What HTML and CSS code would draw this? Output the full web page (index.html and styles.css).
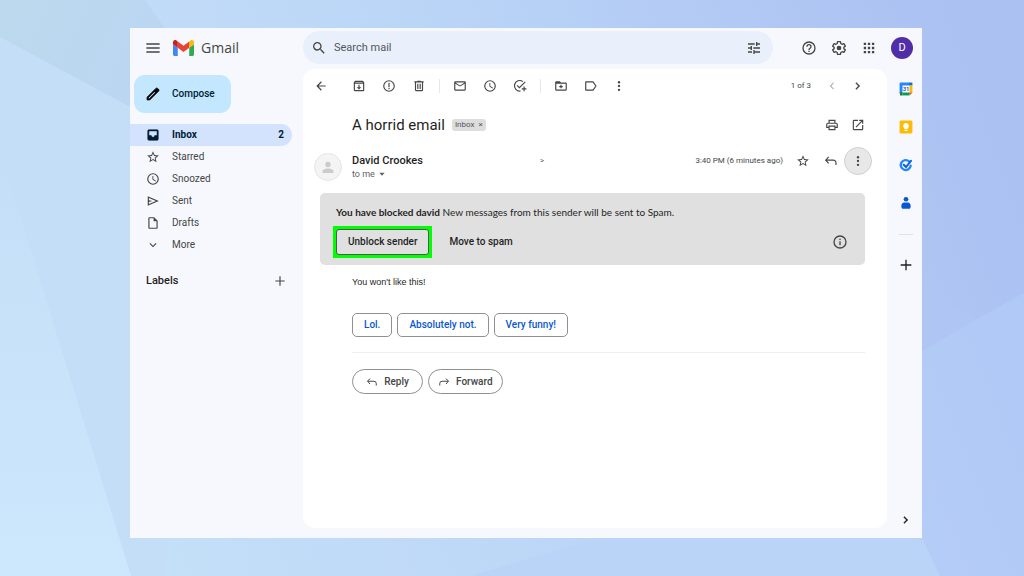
FILE: index.html
```html
<!DOCTYPE html>
<html lang="en">
<head>
  <meta charset="UTF-8" />
  <meta name="viewport" content="width=device-width, initial-scale=1" />
  <title>A horrid email - Gmail</title>
  <link rel="stylesheet" href="styles.css">
</head>
<body>
  <svg class="backdrop" viewBox="0 0 1024 576" preserveAspectRatio="none" aria-hidden="true">
    <defs>
      <linearGradient id="sky" x1="0" y1="0.6" x2="1" y2="0.4">
        <stop offset="0" stop-color="#c6e1f8" />
        <stop offset="0.5" stop-color="#bbd5f7" />
        <stop offset="1" stop-color="#abc1f2" />
      </linearGradient>
      <linearGradient id="corner" x1="0" y1="0" x2="1" y2="0.3">
        <stop offset="0" stop-color="#bdd9ed" />
        <stop offset="1" stop-color="#b9d5f3" />
      </linearGradient>
      <linearGradient id="left" x1="0" y1="0" x2="0" y2="1">
        <stop offset="0" stop-color="#c3def6" />
        <stop offset="1" stop-color="#cde8fd" />
      </linearGradient>
      <linearGradient id="low" x1="0" y1="0.6" x2="1" y2="0.4">
        <stop offset="0" stop-color="#bbd5f8" />
        <stop offset="1" stop-color="#b1c9f6" />
      </linearGradient>
    </defs>
    <rect width="1024" height="576" fill="url(#sky)" />
    <path d="M0 0h145l60 85-60 40L0 37z" fill="url(#corner)" />
    <path d="M0 37l205 110-40 429h-34L0 150z" fill="#c3def6" />
    <path d="M0 150l131 426H0z" fill="url(#left)" />
    <path d="M600 538L922 351l55-32 47-26v283H470z" fill="url(#low)" />
    <path d="M900 275l77 44-77 44z" fill="#afc6f4" />
    <path d="M922 538l18 38H470l130-38z" fill="#bad4f8" />
  </svg>

  <svg class="sprite" aria-hidden="true">
    <symbol id="i-menu" viewBox="0 0 24 24"><path d="M2 5h20v2H2zm0 6h20v2H2zm0 6h20v2H2z" /></symbol>
    <symbol id="i-search" viewBox="0 0 24 24"><path d="M15.500 14h-.79l-.28-.27A6.470 6.470 0 0 0 16 9.500 6.500 6.500 0 1 0 9.500 16c1.610 0 3.090-.59 4.230-1.570l.27.28v.79l5 4.990L20.490 19zm-6 0C7.010 14 5 11.990 5 9.500S7.010 5 9.500 5 14 7.010 14 9.500 11.990 14 9.500 14z" /></symbol>
    <symbol id="i-tune" viewBox="0 0 24 24"><path d="M3 17v2h6v-2zM3 5v2h10V5zm10 16v-2h8v-2h-8v-2h-2v6zM7 9v2H3v2h4v2h2V9zm14 4v-2H11v2zm-6-4h2V7h4V5h-4V3h-2z" /></symbol>
    <symbol id="i-help" viewBox="0 0 24 24"><path d="M11 18h2v-2h-2zm1-16a10 10 0 1 0 0 20 10 10 0 0 0 0-20zm0 18a8 8 0 1 1 0-16 8 8 0 0 1 0 16zm0-14a4 4 0 0 0-4 4h2c0-1.100.9-2 2-2s2 .9 2 2c0 2-3 1.750-3 5h2c0-2.250 3-2.500 3-5a4 4 0 0 0-4-4z" /></symbol>
    <symbol id="i-gear" viewBox="0 0 24 24"><path d="M9.800 2.500h4.400l.5 2.800 1.900 1.100 2.700-1 2.200 3.800-2.200 1.800v2l2.200 1.800-2.200 3.800-2.700-1-1.900 1.100-.5 2.800H9.800l-.5-2.800-1.900-1.100-2.700 1-2.200-3.800L4.700 13v-2L2.500 9.200l2.200-3.800 2.700 1 1.900-1.100z" fill="none" stroke="currentColor" stroke-width="2" stroke-linejoin="round" /><circle cx="12" cy="12" r="3.500" /></symbol>
    <symbol id="i-apps" viewBox="0 0 24 24"><path d="M3 3h4v4H3zm7 0h4v4h-4zm7 0h4v4h-4zM3 10h4v4H3zm7 0h4v4h-4zm7 0h4v4h-4zM3 17h4v4H3zm7 0h4v4h-4zm7 0h4v4h-4z" /></symbol>
    <symbol id="i-pencil" viewBox="0 0 24 24"><path d="M20.410 4.940l-1.350-1.350a2 2 0 0 0-2.830 0L3 16.820V21h4.180L20.410 7.770a2 2 0 0 0 0-2.830zM6.410 19.060H5v-1.360L14.060 8.600l1.410 1.410z" stroke="currentColor" /></symbol>
    <symbol id="i-inbox" viewBox="0 0 24 24"><path d="M19 3H5a2 2 0 0 0-2 2v14c0 1.100.9 2 2 2h14a2 2 0 0 0 2-2V5a2 2 0 0 0-2-2zm0 10h-4a3 3 0 0 1-6 0H5V5h14z" stroke="currentColor" /></symbol>
    <symbol id="i-star" viewBox="0 0 24 24"><path d="M22 9.240l-7.190-.62L12 2 9.190 8.630 2 9.240l5.460 4.730L5.820 21 12 17.270 18.180 21l-1.630-7.030zM12 15.400l-3.760 2.270 1-4.280-3.320-2.880 4.380-.38L12 6.100l1.710 4.040 4.380.38-3.320 2.880 1 4.280z" /></symbol>
    <symbol id="i-clock" viewBox="0 0 24 24"><path d="M12 2a10 10 0 1 0 0 20 10 10 0 0 0 0-20zm0 18a8 8 0 1 1 0-16 8 8 0 0 1 0 16zm.5-13H11v6l5.200 3.200.8-1.300-4.500-2.700z" /></symbol>
    <symbol id="i-send" viewBox="0 0 24 24"><path d="M3 4v16l19-8zm2 3l11.900 5L5 17v-3.500l6-1.500-6-1.500z" /></symbol>
    <symbol id="i-draft" viewBox="0 0 24 24"><path d="M14 2H6a2 2 0 0 0-2 2v16c0 1.100.9 2 2 2h12a2 2 0 0 0 2-2V8zM6 20V4h7v5h5v11z" /></symbol>
    <symbol id="i-down" viewBox="0 0 24 24"><path d="M12 16l-6-6 1.400-1.400 4.600 4.600 4.600-4.600L18 10z" /></symbol>
    <symbol id="i-plus" viewBox="0 0 24 24"><path d="M20 13h-7v7h-2v-7H4v-2h7V4h2v7h7z" /></symbol>
    <symbol id="i-back" viewBox="0 0 24 24"><path d="M20 11H7.830l5.590-5.590L12 4l-8 8 8 8 1.410-1.410L7.830 13H20z" /></symbol>
    <symbol id="i-archive" viewBox="0 0 24 24"><path d="M20.500 5.200l-1.400-1.700c-.3-.3-.7-.5-1.100-.5H6c-.5 0-.9.200-1.200.5L3.500 5.200c-.3.400-.5.800-.5 1.300V19c0 1.100.9 2 2 2h14a2 2 0 0 0 2-2V6.500c0-.5-.2-.9-.5-1.300zM6.200 5h11.600l.8 1H5.400zM5 19V8h14v11zm8-9h-2v4H8l4 4 4-4h-3z" /></symbol>
    <symbol id="i-report" viewBox="0 0 24 24"><path d="M12 2a10 10 0 1 0 0 20 10 10 0 0 0 0-20zm0 18a8 8 0 1 1 0-16 8 8 0 0 1 0 16zM11 6.500h2V14h-2zm0 9h2v2h-2z" /></symbol>
    <symbol id="i-trash" viewBox="0 0 24 24"><path d="M15 4V3H9v1H4v2h1v13c0 1.100.9 2 2 2h10a2 2 0 0 0 2-2V6h1V4zm2 15H7V6h10zM9 8h2v9H9zm4 0h2v9h-2z" /></symbol>
    <symbol id="i-mail" viewBox="0 0 24 24"><path d="M20 4H4a2 2 0 0 0-2 2v12c0 1.100.9 2 2 2h16a2 2 0 0 0 2-2V6a2 2 0 0 0-2-2zm0 14H4V8l8 5 8-5zm-8-7L4 6h16z" /></symbol>
    <symbol id="i-task" viewBox="0 0 24 24"><path d="M17 4.500A9 9 0 1 0 13 20.500" fill="none" stroke="currentColor" stroke-width="2" /><path d="M7 11l4 4L21 5" fill="none" stroke="currentColor" stroke-width="2" /><path d="M18 13h2v3h3v2h-3v3h-2v-3h-3v-2h3z" /></symbol>
    <symbol id="i-folder" viewBox="0 0 24 24"><path d="M20 6h-8l-2-2H4a2 2 0 0 0-2 2v12c0 1.100.9 2 2 2h16a2 2 0 0 0 2-2V8a2 2 0 0 0-2-2zm0 12H4V8h16zm-9-8h2v2h2v2h-2v2h-2v-2H9v-2h2z" /></symbol>
    <symbol id="i-label" viewBox="0 0 24 24"><path d="M3 5h12.500l5 7-5 7H3z" fill="none" stroke="currentColor" stroke-width="2" stroke-linejoin="round" /></symbol>
    <symbol id="i-dots" viewBox="0 0 24 24"><circle cx="12" cy="5.500" r="2" /><circle cx="12" cy="12" r="2" /><circle cx="12" cy="18.500" r="2" /></symbol>
    <symbol id="i-prev" viewBox="0 0 24 24"><path d="M15.400 7.400L14 6l-6 6 6 6 1.400-1.400-4.600-4.600z" /></symbol>
    <symbol id="i-next" viewBox="0 0 24 24"><path d="M9.400 6L8 7.400l4.600 4.600L8 16.600 9.400 18l6-6z" stroke="currentColor" stroke-width=".6" /></symbol>
    <symbol id="i-print" viewBox="0 0 24 24"><path d="M19 8h-1V3H6v5H5a3 3 0 0 0-3 3v6h4v4h12v-4h4v-6a3 3 0 0 0-3-3zM8 5h8v3H8zm8 14H8v-4h8zm2-4v-2H6v2H4v-4c0-.55.450-1 1-1h14c.55 0 1 .450 1 1v4z" /></symbol>
    <symbol id="i-open" viewBox="0 0 24 24"><path d="M19 19H5V5h7V3H5a2 2 0 0 0-2 2v14c0 1.100.9 2 2 2h14a2 2 0 0 0 2-2v-7h-2zM14 3v2h3.590l-9.830 9.830 1.410 1.410L19 6.410V10h2V3z" /></symbol>
    <symbol id="i-reply" viewBox="0 0 24 24"><path d="M8 5l-5 5.500L8 16M3.500 10.500H16a4.500 4.500 0 0 1 4.500 4.500v4" fill="none" stroke="currentColor" stroke-width="2" /></symbol>
    <symbol id="i-forward" viewBox="0 0 24 24"><path d="M16 5l5 5.500-5 5.500M20.500 10.500H8A4.500 4.500 0 0 0 3.500 15v4" fill="none" stroke="currentColor" stroke-width="2" /></symbol>
    <symbol id="i-info" viewBox="0 0 24 24"><path d="M12 2a10 10 0 1 0 0 20 10 10 0 0 0 0-20zm0 18a8 8 0 1 1 0-16 8 8 0 0 1 0 16zM11 7h2v2h-2zm0 4h2v6h-2z" /></symbol>
    <symbol id="i-caret" viewBox="0 0 24 24"><path d="M4 8h16l-8 9z" /></symbol>
  </svg>

  <div class="window">
    <header class="topbar">
      <div class="brand">
        <button class="icon-btn" aria-label="Main menu"><svg class="icon icon-lg"><use href="#i-menu" /></svg></button>
        <a class="logo" href="#">
          <svg class="logo-mark" viewBox="52 42 88 66" aria-hidden="true">
            <path fill="#4285f4" d="M58 108h14V74L52 59v43c0 3.320 2.690 6 6 6" />
            <path fill="#34a853" d="M120 108h14c3.320 0 6-2.690 6-6V59l-20 15" />
            <path fill="#fbbc04" d="M120 48v26l20-15v-8c0-7.420-8.470-11.650-14.400-7.200" />
            <path fill="#ea4335" d="M72 74V48l24 18 24-18v26L96 92" />
            <path fill="#c5221f" d="M52 51v8l20 15V48l-5.600-4.200C60.460 39.350 52 43.580 52 51" />
          </svg>
          Gmail
        </a>
      </div>
      <form class="search">
        <button type="button" class="icon-btn" aria-label="Search"><svg class="icon icon-lg"><use href="#i-search" /></svg></button>
        <input type="search" placeholder="Search mail" aria-label="Search mail" />
        <button type="button" class="icon-btn" aria-label="Search options"><svg class="icon icon-lg"><use href="#i-tune" /></svg></button>
      </form>
      <div class="account">
        <button class="icon-btn" aria-label="Support"><svg class="icon icon-lg"><use href="#i-help" /></svg></button>
        <button class="icon-btn" aria-label="Settings"><svg class="icon icon-lg"><use href="#i-gear" /></svg></button>
        <button class="icon-btn" aria-label="Google apps"><svg class="icon"><use href="#i-apps" /></svg></button>
        <button class="profile" aria-label="Account">D</button>
      </div>
    </header>

    <nav class="sidebar">
      <button class="compose"><svg class="icon icon-lg"><use href="#i-pencil" /></svg>Compose</button>
      <a class="folder active" href="#"><svg class="icon"><use href="#i-inbox" /></svg>Inbox<span class="count">2</span></a>
      <a class="folder" href="#"><svg class="icon"><use href="#i-star" /></svg>Starred</a>
      <a class="folder" href="#"><svg class="icon"><use href="#i-clock" /></svg>Snoozed</a>
      <a class="folder" href="#"><svg class="icon"><use href="#i-send" /></svg>Sent</a>
      <a class="folder" href="#"><svg class="icon"><use href="#i-draft" /></svg>Drafts</a>
      <a class="folder" href="#"><svg class="icon"><use href="#i-down" /></svg>More</a>
      <div class="labels">
        <h2>Labels</h2>
        <button class="icon-btn" aria-label="Create new label"><svg class="icon"><use href="#i-plus" /></svg></button>
      </div>
    </nav>

    <main class="mail">
      <div class="toolbar">
        <button class="icon-btn back" aria-label="Back"><svg class="icon"><use href="#i-back" /></svg></button>
        <button class="icon-btn" aria-label="Archive"><svg class="icon"><use href="#i-archive" /></svg></button>
        <button class="icon-btn" aria-label="Report spam"><svg class="icon"><use href="#i-report" /></svg></button>
        <button class="icon-btn" aria-label="Delete"><svg class="icon"><use href="#i-trash" /></svg></button>
        <span class="divider"></span>
        <button class="icon-btn" aria-label="Mark as unread"><svg class="icon"><use href="#i-mail" /></svg></button>
        <button class="icon-btn" aria-label="Snooze"><svg class="icon"><use href="#i-clock" /></svg></button>
        <button class="icon-btn" aria-label="Add to tasks"><svg class="icon"><use href="#i-task" /></svg></button>
        <span class="divider"></span>
        <button class="icon-btn" aria-label="Move to"><svg class="icon"><use href="#i-folder" /></svg></button>
        <button class="icon-btn" aria-label="Labels"><svg class="icon"><use href="#i-label" /></svg></button>
        <button class="icon-btn narrow" aria-label="More"><svg class="icon"><use href="#i-dots" /></svg></button>
        <span class="pager">1 of 3</span>
        <button class="icon-btn narrow" aria-label="Newer" disabled><svg class="icon"><use href="#i-prev" /></svg></button>
        <button class="icon-btn narrow" aria-label="Older"><svg class="icon"><use href="#i-next" /></svg></button>
      </div>

      <div class="subject">
        <h1>A horrid email</h1>
        <span class="tag">Inbox <button aria-label="Remove label Inbox">×</button></span>
        <div class="subject-actions">
          <button class="icon-btn narrow" aria-label="Print"><svg class="icon"><use href="#i-print" /></svg></button>
          <button class="icon-btn narrow" aria-label="Open in new window"><svg class="icon"><use href="#i-open" /></svg></button>
        </div>
      </div>

      <div class="sender">
        <svg class="avatar" viewBox="0 0 28 28" aria-hidden="true">
          <circle cx="14" cy="14" r="13.500" fill="#f4f4f4" stroke="#e4e4e4" />
          <circle cx="14" cy="11.500" r="2.700" fill="#cbcbcb" />
          <path d="M8.500 20v-1.500c0-4 11-4 11 0V20z" fill="#cbcbcb" />
        </svg>
        <div class="who">
          <strong>David Crookes</strong>
          <button class="to">to me <svg class="icon icon-sm"><use href="#i-caret" /></svg></button>
        </div>
        <span class="bracket">&gt;</span>
        <span class="date">3:40 PM (6 minutes ago)</span>
        <button class="icon-btn" aria-label="Star"><svg class="icon"><use href="#i-star" /></svg></button>
        <button class="icon-btn narrow" aria-label="Reply"><svg class="icon"><use href="#i-reply" /></svg></button>
        <button class="icon-btn round" aria-label="More options"><svg class="icon"><use href="#i-dots" /></svg></button>
      </div>

      <section class="notice">
        <p><strong>You have blocked david</strong> New messages from this sender will be sent to Spam.</p>
        <div class="notice-actions">
          <div class="highlight"><button class="unblock">Unblock sender</button></div>
          <button class="spam">Move to spam</button>
          <button class="icon-btn info" aria-label="Learn more"><svg class="icon icon-lg"><use href="#i-info" /></svg></button>
        </div>
      </section>

      <div class="message">
        <p>You won't like this!</p>
        <div class="replies">
          <button>Lol.</button>
          <button>Absolutely not.</button>
          <button>Very funny!</button>
        </div>
        <div class="respond">
          <button><svg class="icon"><use href="#i-reply" /></svg>Reply</button>
          <button><svg class="icon"><use href="#i-forward" /></svg>Forward</button>
        </div>
      </div>
    </main>

    <aside class="rail">
      <a href="#" aria-label="Calendar">
        <svg class="app" viewBox="0 0 24 24">
          <path fill="#fff" d="M5 5h14v14H5z" />
          <path fill="#2684fc" d="M2 1h17v5H6v13H1V2z" />
          <path fill="#1967d2" d="M18 1h5v5h-5z" />
          <path fill="#ffba00" d="M18 6h5v12h-5z" />
          <path fill="#188038" d="M1 18h5v5H2z" />
          <path fill="#00a04a" d="M6 18h12v5H6z" />
          <path fill="#ea4335" d="M18 18h5l-5 5z" />
          <text x="12" y="16" text-anchor="middle">31</text>
        </svg>
      </a>
      <a href="#" aria-label="Keep">
        <svg class="app" viewBox="0 0 24 24">
          <rect x="1" y="1" width="22" height="22" rx="2" fill="#fbbc04" />
          <path fill="#fff" d="M12 5a5 5 0 0 0-3 9v2h6v-2a5 5 0 0 0-3-9zM9.500 17h5v2h-5z" />
        </svg>
      </a>
      <a href="#" aria-label="Tasks">
        <svg class="app" viewBox="0 0 24 24" fill="none" stroke-linecap="round">
          <path d="M17.500 6A8.500 8.500 0 1 0 20 13" stroke="#2684fc" stroke-width="4" />
          <path d="M8 11.500l4 4L20.500 5" stroke="#0066da" stroke-width="3.500" />
        </svg>
      </a>
      <a href="#" aria-label="Contacts">
        <svg class="app" viewBox="0 0 24 24" fill="#0b57d0">
          <circle cx="12" cy="5.500" r="4" />
          <path d="M4 17c0-4 2-6 5-6h6c3 0 5 2 5 6 0 3-1 5-3 5H7c-2 0-3-2-3-5z" />
        </svg>
      </a>
      <span class="rule"></span>
      <button class="icon-btn" aria-label="Get add-ons"><svg class="icon icon-lg"><use href="#i-plus" /></svg></button>
      <button class="icon-btn hide" aria-label="Hide side panel"><svg class="icon"><use href="#i-next" /></svg></button>
    </aside>
  </div>
</body>
</html>
```

FILE: styles.css
```css
* {
  box-sizing: border-box;
}

body {
  margin: 0;
  min-height: 100vh;
  display: flex;
  padding: 28px 102px 38px 130px;
  background: #c0daf7;
  font-family: Roboto, "Liberation Sans", sans-serif;
  font-size: 11px;
  line-height: 14px;
  color: #1f1f1f;
}

h1, h2, p {
  margin: 0;
  font-weight: 400;
}

a {
  color: inherit;
  text-decoration: none;
}

button, input {
  font: inherit;
  color: inherit;
  background: none;
  border: 0;
  padding: 0;
}

button {
  cursor: pointer;
}

.backdrop {
  position: fixed;
  inset: 0;
  width: 100%;
  height: 100%;
  z-index: -1;
}

.sprite {
  position: absolute;
  width: 0;
  height: 0;
}

.icon {
  width: 14px;
  height: 14px;
  flex: none;
  fill: currentColor;
}

.icon-lg {
  width: 16px;
  height: 16px;
}

.icon-sm {
  width: 8px;
  height: 8px;
}

.icon-btn {
  width: 30px;
  height: 28px;
  flex: none;
  display: flex;
  align-items: center;
  justify-content: center;
  color: #444746;
}

.icon-btn.narrow {
  width: 26px;
}

.icon-btn:disabled {
  color: #b0b2b2;
}

.window {
  flex: 1;
  min-width: 0;
  display: grid;
  grid-template-columns: 173px minmax(0, 1fr) 35px;
  grid-template-rows: auto 1fr;
  background: #f6f8fd;
}

/* top bar */
.topbar {
  grid-column: 1 / -1;
  display: flex;
  padding: 3px 9px 5px 0;
}

.brand {
  width: 173px;
  flex: none;
  display: flex;
  align-items: center;
  padding-left: 8px;
}

.logo {
  display: flex;
  align-items: center;
  gap: 7px;
  margin-left: 5px;
  font-family: "Open Sans", Roboto, sans-serif;
  font-size: 14px;
  color: #444746;
}

.logo-mark {
  width: 21px;
  height: 16px;
}

.search {
  flex: 1;
  height: 33px;
  display: flex;
  align-items: center;
  padding: 0 4px 0 1px;
  border-radius: 17px;
  background: #e9f0fb;
}

.search input {
  flex: 1;
  min-width: 0;
  outline: none;
}

.search input::placeholder {
  color: #54575a;
  opacity: 1;
}

.account {
  display: flex;
  align-items: center;
  margin-left: 21px;
}

.profile {
  width: 22px;
  height: 22px;
  margin-left: 7px;
  border-radius: 50%;
  background: #512da8;
  color: #fff;
}

/* sidebar */
.sidebar {
  padding-top: 6px;
  font-size: 10px;
}

.compose {
  display: flex;
  align-items: center;
  gap: 11px;
  height: 38px;
  margin: 0 0 11px 4px;
  padding: 0 16px 0 11px;
  border-radius: 11px;
  background: #c2e7ff;
  color: #001d35;
  font-weight: 500;
}

.compose .icon {
  color: #000;
}

.folder {
  display: flex;
  align-items: center;
  gap: 12px;
  height: 22px;
  margin-right: 11px;
  padding: 0 8px 0 16px;
  border-radius: 0 11px 11px 0;
  color: #444746;
}

.folder.active {
  background: #d3e3fd;
  color: #001d35;
  font-weight: 700;
}

.count {
  margin-left: auto;
}

.labels {
  display: flex;
  align-items: center;
  justify-content: space-between;
  margin-top: 11px;
  padding: 0 8px 0 16px;
}

.labels h2 {
  font-size: 11px;
  font-weight: 500;
}

/* mail card */
.mail {
  margin-bottom: 10px;
  border-radius: 12px;
  background: #fff;
}

.toolbar {
  display: flex;
  align-items: center;
  height: 34px;
  padding: 0 16px 0 3px;
}

.back {
  margin-right: 8px;
}

.divider {
  width: 1px;
  height: 14px;
  margin: 0 5px;
  background: #e6e8eb;
}

.pager {
  margin-left: auto;
  margin-right: 8px;
  font-size: 8px;
  color: #444746;
}

.subject {
  display: flex;
  align-items: center;
  height: 44px;
  padding: 0 16px 0 49px;
}

.subject h1 {
  font-size: 15px;
  line-height: 20px;
}

.tag {
  display: flex;
  gap: 4px;
  margin-left: 7px;
  padding: 0 3px;
  border-radius: 3px;
  background: #ddd;
  color: #555;
  font-size: 8px;
  line-height: 12px;
}

.subject-actions {
  display: flex;
  margin-left: auto;
}

.sender {
  display: flex;
  height: 36px;
  padding: 0 15px 0 11px;
}

.sender .icon-btn {
  align-self: flex-start;
}

.avatar {
  width: 28px;
  height: 28px;
  flex: none;
  margin-top: 6px;
}

.who {
  width: 188px;
  margin-left: 10px;
  padding-top: 7px;
}

.who strong {
  display: block;
  font-weight: 500;
}

.to {
  display: flex;
  align-items: center;
  gap: 3px;
  font-size: 9px;
  line-height: 12px;
  color: #5f6368;
}

.bracket {
  padding-top: 7px;
  font-size: 8px;
  color: #5f6368;
}

.date {
  margin-left: auto;
  margin-right: 5px;
  padding-top: 7px;
  font-size: 8px;
  color: #444746;
}

.sender .round {
  width: 28px;
  border: 1px solid #d0d0d0;
  border-radius: 50%;
  background: #e8e8e8;
}

.notice {
  margin: 10px 22px 0 17px;
  padding: 12px 10px 7px 13px;
  border-radius: 5px;
  background: #e0e0e0;
  font-size: 10px;
}

.notice p {
  padding-left: 3px;
  font-family: Lato, Roboto, sans-serif;
}

.notice strong {
  font-weight: 700;
}

.notice-actions {
  display: flex;
  align-items: center;
  margin-top: 7px;
  font-weight: 500;
}

.highlight {
  padding: 3px;
  background: #00ff00;
}

.unblock {
  display: block;
  height: 26px;
  padding: 0 11px;
  border: 1px solid #555;
  border-radius: 3px;
  background: #e0e0e0;
}

.spam {
  margin-left: 17px;
}

.info {
  margin-left: auto;
}

.message {
  margin: 10px 22px 0 49px;
  font-family: "Liberation Sans", sans-serif;
  font-size: 9px;
}

.replies, .respond {
  display: flex;
  gap: 5px;
  font-family: Roboto, "Liberation Sans", sans-serif;
  font-size: 10px;
  font-weight: 500;
}

.replies {
  padding: 24px 0 15px;
  border-bottom: 1px solid #eceff1;
}

.replies button {
  height: 24px;
  padding: 0 11px;
  border: 1px solid #8e918f;
  border-radius: 5px;
  color: #0b57d0;
}

.respond {
  padding-top: 16px;
}

.respond button {
  display: flex;
  align-items: center;
  justify-content: center;
  gap: 6px;
  min-width: 71px;
  height: 25px;
  padding: 0 9px;
  border: 1px solid #8e918f;
  border-radius: 13px;
  color: #444746;
}

.respond .icon {
  width: 12px;
  height: 12px;
}

/* right rail */
.rail {
  display: flex;
  flex-direction: column;
  align-items: center;
  gap: 24px;
  padding: 13px 0 4px 3px;
}

.rail a, .app {
  display: block;
  width: 14px;
  height: 14px;
}

.app text {
  font-size: 10px;
  font-weight: 700;
  fill: #1967d2;
}

.rule {
  width: 14px;
  height: 1px;
  background: #dfe1e5;
}

.rail .icon-btn {
  margin-top: -8px;
  color: #1f1f1f;
}

.rail .hide {
  margin-top: auto;
}
```
